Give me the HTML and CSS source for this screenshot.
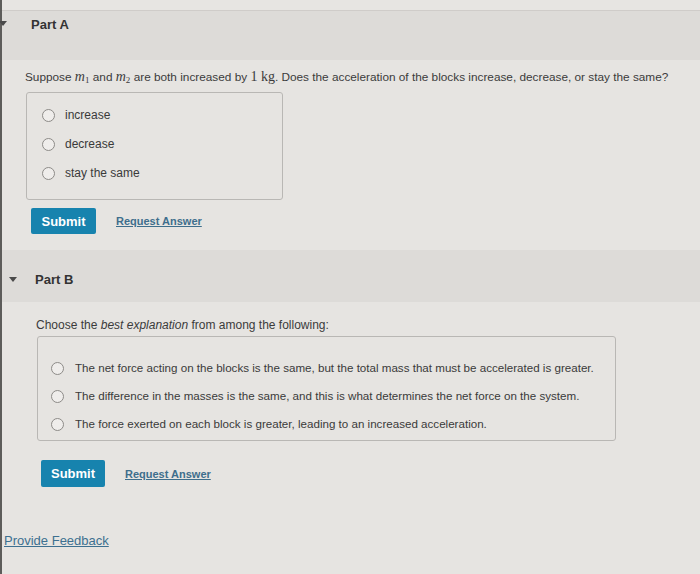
FILE: index.html
```html
<!DOCTYPE html>
<html>
<head>
<meta charset="utf-8">
<link rel="stylesheet" href="styles.css">
</head>
<body>
<div class="page">
  <div class="topstrip"></div>
  <section class="part part-a">
    <div class="part-header"><span class="caret"></span><span class="part-title">Part A</span></div>
    <div class="part-body">
      <p class="question">Suppose <span class="math"><i>m</i><sub>1</sub></span> and <span class="math"><i>m</i><sub>2</sub></span> are both increased by <span class="math">1 kg</span>. Does the acceleration of the blocks increase, decrease, or stay the same?</p>
      <div class="options options-a">
        <label class="option"><span class="radio"></span><span>increase</span></label>
        <label class="option"><span class="radio"></span><span>decrease</span></label>
        <label class="option"><span class="radio"></span><span>stay the same</span></label>
      </div>
      <div class="actions">
        <button class="submit">Submit</button>
        <a class="request">Request Answer</a>
      </div>
    </div>
  </section>
  <section class="part part-b">
    <div class="part-header"><span class="caret"></span><span class="part-title">Part B</span></div>
    <div class="part-body">
      <p class="question">Choose the <em>best explanation</em> from among the following:</p>
      <div class="options options-b">
        <label class="option"><span class="radio"></span><span>The net force acting on the blocks is the same, but the total mass that must be accelerated is greater.</span></label>
        <label class="option"><span class="radio"></span><span>The difference in the masses is the same, and this is what determines the net force on the system.</span></label>
        <label class="option"><span class="radio"></span><span>The force exerted on each block is greater, leading to an increased acceleration.</span></label>
      </div>
      <div class="actions">
        <button class="submit">Submit</button>
        <a class="request">Request Answer</a>
      </div>
    </div>
  </section>
  <div class="feedback"><a class="feedback-link">Provide Feedback</a></div>
</div>
</body>
</html>
```
FILE: styles.css
```css
html, body {
  margin: 0;
  padding: 0;
  background: #e6e4e1;
}
body {
  font-family: "Liberation Sans", Arial, sans-serif;
  color: #3b3b3b;
  width: 700px;
  height: 574px;
  overflow: hidden;
}
.page {
  border-left: 2px solid #5d5c5a;
  height: 574px;
  box-sizing: border-box;
  display: flex;
  flex-direction: column;
}
.topstrip {
  height: 10px;
  border-bottom: 1px solid #cfccc9;
  background: #e7e5e2;
}
.part-header {
  display: flex;
  align-items: flex-start;
  background: #dddbd8;
  height: 49px;
  box-sizing: border-box;
}
.caret {
  width: 0;
  height: 0;
  border-left: 4px solid transparent;
  border-right: 4px solid transparent;
  border-top: 5px solid #4a4a4a;
}
.part-title {
  font-weight: bold;
  font-size: 13px;
  color: #333;
}
.part-a .part-header {
  padding-top: 6px;
  padding-left: 0;
}
.part-a .caret { margin-left: -3px; margin-top: 4px; margin-right: 24px; }
.part-a .part-body { padding-left: 23px; padding-top: 9px; }
.part-a .question { font-size: 11.8px; }
.part-b { margin-top: 16px; }
.part-b .part-header {
  padding-top: 22px;
  height: 52px;
}
.part-b .caret { margin-left: 7px; margin-top: 5px; margin-right: 18px; }
.part-b .part-body { padding-left: 34px; padding-top: 15px; }
.question {
  margin: 0;
  font-size: 12px;
  line-height: 16px;
}
.math {
  font-family: "Liberation Serif", "Times New Roman", serif;
  font-size: 14px;
}
.math i { font-style: italic; }
.math sub { font-size: 9px; vertical-align: -2px; font-style: normal; }
.options {
  border: 1px solid #b9b7b4;
  border-radius: 3px;
  display: flex;
  flex-direction: column;
  box-sizing: border-box;
}
.options-a {
  margin-top: 4px;
  margin-left: 1px;
  width: 257px;
  height: 108px;
  padding: 14px 0 0 15px;
  gap: 13px;
}
.options-b {
  margin-top: 3px;
  margin-left: 1px;
  width: 579px;
  height: 105px;
  padding: 23px 0 0 13px;
  gap: 12px;
}
.option {
  display: flex;
  align-items: center;
  font-size: 12px;
  line-height: 16px;
  color: #3a3a3a;
}
.options-b .option { font-size: 11.6px; }
.radio {
  width: 11px;
  height: 11px;
  border: 1px solid #8d8b88;
  border-radius: 50%;
  background: #efedeb;
  margin-right: 10px;
  flex: none;
}
.options-b .radio { margin-right: 11px; }
.actions {
  display: flex;
  align-items: center;
  margin-top: 8px;
  margin-left: 6px;
}
.submit {
  background: #1783ae;
  color: #ffffff;
  border: none;
  border-radius: 2px;
  font-family: "Liberation Sans", Arial, sans-serif;
  font-weight: bold;
  font-size: 13px;
  width: 65px;
  height: 26px;
  padding: 0;
}
.request {
  margin-left: 20px;
  font-size: 11px;
  font-weight: bold;
  color: #3e6e8c;
  text-decoration: underline;
}
.part-b .actions { margin-top: 19px; margin-left: 5px; }
.part-b .submit { width: 64px; height: 27px; }
.feedback {
  margin-top: 44px;
  padding-left: 2px;
}
.feedback-link {
  font-size: 13px;
  color: #3d7090;
  text-decoration: underline;
}
```
